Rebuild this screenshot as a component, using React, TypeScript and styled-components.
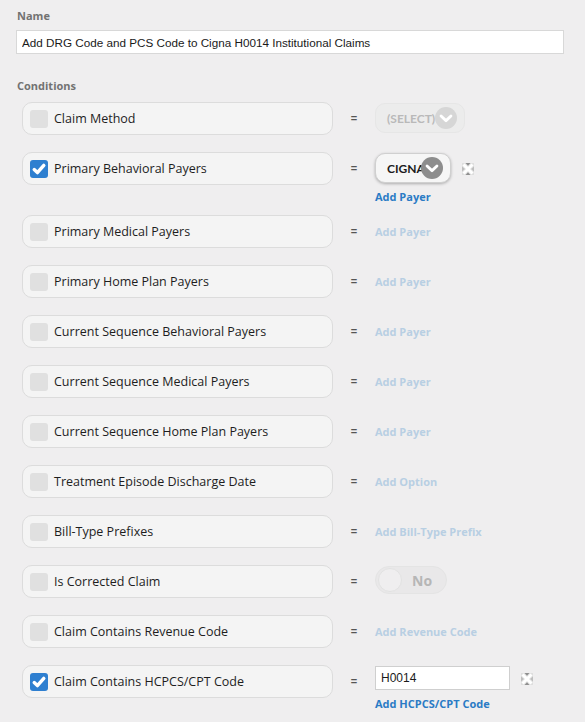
import React from "react";
import styled, { createGlobalStyle } from "styled-components";

const GlobalStyle = createGlobalStyle`
  body {
    margin: 0;
    background: #efeeef;
    font-family: "Open Sans", "Liberation Sans", sans-serif;
  }
`;

const Page = styled.div`
  padding: 9px 22px 24px 16px;
`;

const FieldLabel = styled.div`
  font: 700 11px/14px "Open Sans", sans-serif;
  color: #727272;
  padding-left: 1px;
`;

const NameInput = styled.input`
  display: block;
  box-sizing: border-box;
  width: 548px;
  height: 24px;
  margin: 7px 0 25px;
  padding: 0 5px;
  border: 1px solid #d8d8d8;
  background: #fff;
  font: 11.7px "Liberation Sans", Arial, sans-serif;
  color: #1a1a1a;
  outline: none;
`;

const ConditionList = styled.div`
  display: flex;
  flex-direction: column;
  gap: 17px;
  margin: 9px 0 0 6px;
`;

const Row = styled.div`
  display: grid;
  grid-template-columns: 311px 42px auto;
  align-items: start;
`;

const ConditionBox = styled.div`
  box-sizing: border-box;
  height: 33px;
  display: flex;
  align-items: center;
  padding-left: 7px;
  background: #f4f4f4;
  border: 1px solid #dcdcdc;
  border-radius: 10px;
`;

const ConditionName = styled.span`
  margin-left: 6px;
  font: 12.5px "Open Sans", sans-serif;
  color: #1e1e1e;
`;

const Eq = styled.div`
  height: 33px;
  text-align: center;
  font: 700 11px/33px "Liberation Sans", sans-serif;
  color: #555;
`;

const ValueCol = styled.div`
  display: flex;
  flex-direction: column;
  align-items: flex-start;
`;

const ControlLine = styled.div`
  display: flex;
  align-items: center;
  margin-top: 1px;
`;

const AddLink = styled.span<{ $disabled?: boolean; $under?: boolean }>`
  font: 700 11px "Open Sans", sans-serif;
  line-height: ${({ $under }) => ($under ? "14px" : "33px")};
  margin-top: ${({ $under }) => ($under ? "7px" : "0")};
  margin-bottom: ${({ $under }) => ($under ? "-6px" : "0")};
  color: ${({ $disabled }) => ($disabled ? "#b8cfe3" : "#2a7bc5")};
  cursor: pointer;
`;

const SelectBox = styled.div<{ $disabled?: boolean; $overlap: number }>`
  box-sizing: border-box;
  height: 30px;
  display: flex;
  align-items: center;
  padding: 0 7px 0 11px;
  border-radius: 10px;
  background: ${({ $disabled }) => ($disabled ? "#ececec" : "#f6f6f6")};
  border: 1px solid ${({ $disabled }) => ($disabled ? "#e6e6e6" : "#d0d0d0")};
  box-shadow: ${({ $disabled }) =>
    $disabled ? "none" : "0 1px 3px rgba(0, 0, 0, 0.28)"};
  font: 700 12px "Lato", "Open Sans", sans-serif;
  white-space: nowrap;
  color: ${({ $disabled }) => ($disabled ? "#b9b9b9" : "#1c1c1c")};

  svg {
    flex: none;
    margin-left: ${({ $overlap }) => -$overlap}px;
  }
`;

const TextValue = styled.input`
  box-sizing: border-box;
  width: 135px;
  height: 24px;
  padding: 0 5px;
  border: 1px solid #cfcfcf;
  background: #fff;
  font: 12px "Liberation Sans", Arial, sans-serif;
  color: #1a1a1a;
  outline: none;
`;

const RemoveBtn = styled.span`
  display: inline-flex;
  margin-left: 11px;
  margin-top: 2px;
`;

const Toggle = styled.div`
  box-sizing: border-box;
  width: 72px;
  height: 28px;
  display: flex;
  align-items: center;
  padding: 0 2px;
  border-radius: 14px;
  background: #e9e8e9;
  border: 1px solid #e4e4e4;
`;

const Knob = styled.span`
  box-sizing: border-box;
  width: 24px;
  height: 24px;
  border-radius: 50%;
  background: #efeeef;
  border: 1px solid #e2e2e2;
`;

const ToggleText = styled.span`
  margin-left: 10px;
  font: 700 14px "Open Sans", sans-serif;
  color: #b6b6b6;
`;

const Checkbox = ({ checked }: { checked?: boolean }) =>
  checked ? (
    <svg width="18" height="18" viewBox="0 0 18 18">
      <rect width="18" height="18" rx="3" fill="#2e7fd0" />
      <path
        d="M4.2 9.6 L7.4 12.6 L13.8 5.4"
        fill="none"
        stroke="#fff"
        strokeWidth="3.4"
        strokeLinecap="round"
        strokeLinejoin="round"
      />
    </svg>
  ) : (
    <svg width="18" height="18" viewBox="0 0 18 18">
      <rect width="18" height="18" rx="3" fill="#e0e0e0" />
    </svg>
  );

const Chevron = ({ light }: { light?: boolean }) => (
  <svg width="22" height="22" viewBox="0 0 20 20">
    <circle cx="10" cy="10" r="10" fill={light ? "#d6d6d6" : "#8d8d8d"} />
    <path
      d="M5.5 8.2 L10 12.4 L14.5 8.2"
      fill="none"
      stroke="#fff"
      strokeWidth="2.6"
      strokeLinecap="round"
      strokeLinejoin="round"
    />
  </svg>
);

const RemoveIcon = () => (
  <svg width="12" height="12" viewBox="0 0 12 12">
    <rect width="12" height="12" fill="#dedede" />
    <path d="M3.6 0 L6 2.8 L8.4 0 Z M3.6 12 L6 9.2 L8.4 12 Z" fill="#8f8f8f" />
    <path d="M0 3.6 L2.8 6 L0 8.4 Z M12 3.6 L9.2 6 L12 8.4 Z" fill="#bdbdbd" />
    <path
      d="M1.5 1.5 L10.5 10.5 M10.5 1.5 L1.5 10.5"
      stroke="#fff"
      strokeWidth="3"
    />
  </svg>
);

type Condition = {
  name: string;
  checked?: boolean;
  value: React.ReactNode;
};

const conditions: Condition[] = [
  {
    name: "Claim Method",
    value: (
      <ControlLine>
        <SelectBox $disabled $overlap={0}>
          (SELECT)
          <Chevron light />
        </SelectBox>
      </ControlLine>
    ),
  },
  {
    name: "Primary Behavioral Payers",
    checked: true,
    value: (
      <>
        <ControlLine>
          <SelectBox $overlap={4}>
            CIGNA
            <Chevron />
          </SelectBox>
          <RemoveBtn>
            <RemoveIcon />
          </RemoveBtn>
        </ControlLine>
        <AddLink $under>Add Payer</AddLink>
      </>
    ),
  },
  { name: "Primary Medical Payers", value: <AddLink $disabled>Add Payer</AddLink> },
  { name: "Primary Home Plan Payers", value: <AddLink $disabled>Add Payer</AddLink> },
  {
    name: "Current Sequence Behavioral Payers",
    value: <AddLink $disabled>Add Payer</AddLink>,
  },
  {
    name: "Current Sequence Medical Payers",
    value: <AddLink $disabled>Add Payer</AddLink>,
  },
  {
    name: "Current Sequence Home Plan Payers",
    value: <AddLink $disabled>Add Payer</AddLink>,
  },
  {
    name: "Treatment Episode Discharge Date",
    value: <AddLink $disabled>Add Option</AddLink>,
  },
  {
    name: "Bill-Type Prefixes",
    value: <AddLink $disabled>Add Bill-Type Prefix</AddLink>,
  },
  {
    name: "Is Corrected Claim",
    value: (
      <ControlLine>
        <Toggle>
          <Knob />
          <ToggleText>No</ToggleText>
        </Toggle>
      </ControlLine>
    ),
  },
  {
    name: "Claim Contains Revenue Code",
    value: <AddLink $disabled>Add Revenue Code</AddLink>,
  },
  {
    name: "Claim Contains HCPCS/CPT Code",
    checked: true,
    value: (
      <>
        <ControlLine>
          <TextValue defaultValue="H0014" />
          <RemoveBtn>
            <RemoveIcon />
          </RemoveBtn>
        </ControlLine>
        <AddLink $under>Add HCPCS/CPT Code</AddLink>
      </>
    ),
  },
];

const App = () => (
  <Page>
    <GlobalStyle />
    <FieldLabel>Name</FieldLabel>
    <NameInput defaultValue="Add DRG Code and PCS Code to Cigna H0014 Institutional Claims" />
    <FieldLabel>Conditions</FieldLabel>
    <ConditionList>
      {conditions.map((c) => (
        <Row key={c.name}>
          <ConditionBox>
            <Checkbox checked={c.checked} />
            <ConditionName>{c.name}</ConditionName>
          </ConditionBox>
          <Eq>=</Eq>
          <ValueCol>{c.value}</ValueCol>
        </Row>
      ))}
    </ConditionList>
  </Page>
);

export default App;
